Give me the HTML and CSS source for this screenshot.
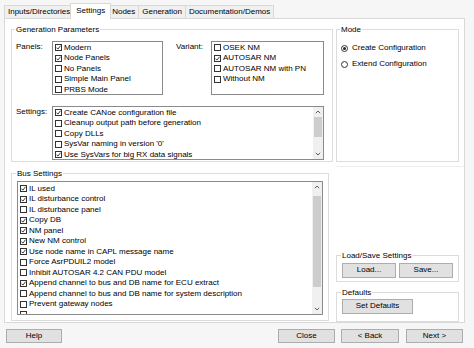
FILE: index.html
```html
<!DOCTYPE html>
<html>
<head>
<meta charset="utf-8">
<link rel="stylesheet" href="styles.css">
</head>
<body>
<div class="tabs">
  <div class="tab">Inputs/Directories</div>
  <div class="tab sel">Settings</div>
  <div class="tab">Nodes</div>
  <div class="tab">Generation</div>
  <div class="tab">Documentation/Demos</div>
</div>
<div class="page">
  <div class="col-left">
    <fieldset class="grp gen">
      <legend>Generation Parameters</legend>
      <div class="row">
        <div class="lbl">Panels:</div>
        <div class="lb lb-panels">
          <div class="items">
            <div class="it"><span class="cb on"><svg viewBox="0 0 5 5"><polyline points="0.4,2.6 1.9,4.1 4.6,0.7"/></svg></span>Modern</div>
            <div class="it"><span class="cb on"><svg viewBox="0 0 5 5"><polyline points="0.4,2.6 1.9,4.1 4.6,0.7"/></svg></span>Node Panels</div>
            <div class="it"><span class="cb"></span>No Panels</div>
            <div class="it"><span class="cb"></span>Simple Main Panel</div>
            <div class="it"><span class="cb"></span>PRBS Mode</div>
          </div>
        </div>
        <div class="lbl lbl-var">Variant:</div>
        <div class="lb lb-var">
          <div class="items">
            <div class="it"><span class="cb"></span>OSEK NM</div>
            <div class="it"><span class="cb on"><svg viewBox="0 0 5 5"><polyline points="0.4,2.6 1.9,4.1 4.6,0.7"/></svg></span>AUTOSAR NM</div>
            <div class="it"><span class="cb"></span>AUTOSAR NM with PN</div>
            <div class="it"><span class="cb"></span>Without NM</div>
          </div>
        </div>
      </div>
      <div class="row row-set">
        <div class="lbl">Settings:</div>
        <div class="lb lb-set">
          <div class="items">
            <div class="it"><span class="cb on"><svg viewBox="0 0 5 5"><polyline points="0.4,2.6 1.9,4.1 4.6,0.7"/></svg></span>Create CANoe configuration file</div>
            <div class="it"><span class="cb"></span>Cleanup output path before generation</div>
            <div class="it"><span class="cb"></span>Copy DLLs</div>
            <div class="it"><span class="cb"></span>SysVar naming in version '0'</div>
            <div class="it"><span class="cb on"><svg viewBox="0 0 5 5"><polyline points="0.4,2.6 1.9,4.1 4.6,0.7"/></svg></span>Use SysVars for big RX data signals</div>
          </div>
          <div class="sb">
            <div class="arr"><svg viewBox="0 0 6 4"><polyline points="0.8,3.2 3,1 5.2,3.2"/></svg></div>
            <div class="track"><div class="thumb thumb-s"></div></div>
            <div class="arr"><svg viewBox="0 0 6 4"><polyline points="0.8,0.8 3,3 5.2,0.8"/></svg></div>
          </div>
        </div>
      </div>
    </fieldset>
    <fieldset class="grp bus">
      <legend>Bus Settings</legend>
      <div class="lb lb-bus">
        <div class="items">
          <div class="it"><span class="cb on"><svg viewBox="0 0 5 5"><polyline points="0.4,2.6 1.9,4.1 4.6,0.7"/></svg></span>IL used</div>
          <div class="it"><span class="cb on"><svg viewBox="0 0 5 5"><polyline points="0.4,2.6 1.9,4.1 4.6,0.7"/></svg></span>IL disturbance control</div>
          <div class="it"><span class="cb"></span>IL disturbance panel</div>
          <div class="it"><span class="cb on"><svg viewBox="0 0 5 5"><polyline points="0.4,2.6 1.9,4.1 4.6,0.7"/></svg></span>Copy DB</div>
          <div class="it"><span class="cb on"><svg viewBox="0 0 5 5"><polyline points="0.4,2.6 1.9,4.1 4.6,0.7"/></svg></span>NM panel</div>
          <div class="it"><span class="cb on"><svg viewBox="0 0 5 5"><polyline points="0.4,2.6 1.9,4.1 4.6,0.7"/></svg></span>New NM control</div>
          <div class="it"><span class="cb on"><svg viewBox="0 0 5 5"><polyline points="0.4,2.6 1.9,4.1 4.6,0.7"/></svg></span>Use node name in CAPL message name</div>
          <div class="it"><span class="cb"></span>Force AsrPDUIL2 model</div>
          <div class="it"><span class="cb"></span>Inhibit AUTOSAR 4.2 CAN PDU model</div>
          <div class="it"><span class="cb on"><svg viewBox="0 0 5 5"><polyline points="0.4,2.6 1.9,4.1 4.6,0.7"/></svg></span>Append channel to bus and DB name for ECU extract</div>
          <div class="it"><span class="cb"></span>Append channel to bus and DB name for system description</div>
          <div class="it"><span class="cb"></span>Prevent gateway nodes</div>
          <div class="it"><span class="cb"></span></div>
        </div>
        <div class="sb">
          <div class="arr"><svg viewBox="0 0 6 4"><polyline points="0.8,3.2 3,1 5.2,3.2"/></svg></div>
          <div class="track"><div class="thumb thumb-b"></div></div>
          <div class="arr"><svg viewBox="0 0 6 4"><polyline points="0.8,0.8 3,3 5.2,0.8"/></svg></div>
        </div>
      </div>
    </fieldset>
  </div>
  <div class="col-right">
    <fieldset class="grp mode">
      <legend>Mode</legend>
      <div class="radio"><span class="rb on"></span>Create Configuration</div>
      <div class="radio"><span class="rb"></span>Extend Configuration</div>
    </fieldset>
    <div class="lower">
      <fieldset class="grp ls">
        <legend>Load/Save Settings</legend>
        <div class="btnrow">
          <div class="btn w-ls">Load...</div>
          <div class="btn w-ls">Save...</div>
        </div>
      </fieldset>
      <fieldset class="grp defs">
        <legend>Defaults</legend>
        <div class="btn w-def">Set Defaults</div>
      </fieldset>
    </div>
  </div>
</div>
<div class="footer">
  <div class="btn fb w-help">Help</div>
  <div class="spacer"></div>
  <div class="btn fb w-close">Close</div>
  <div class="btn fb w-back">&lt; Back</div>
  <div class="btn fb w-next">Next &gt;</div>
</div>
</body>
</html>
```
FILE: styles.css
```css
* { box-sizing: border-box; margin: 0; padding: 0; }
html, body { width: 474px; height: 348px; overflow: hidden; }
body {
  background: #f6f6f6;
  font-family: "Liberation Sans", Arial, sans-serif;
  font-size: 8px;
  line-height: 10.5px;
  color: #000;
}

/* tabs */
.tabs { display: flex; align-items: flex-end; height: 18px; padding-left: 4px; }
.tab {
  height: 13px; line-height: 12px; padding: 0 3px;
  border: 1px solid #d9d9d9; border-bottom: 0;
  background: #f0f0f0; margin-right: -1px; white-space: nowrap;
}
.tab.sel {
  height: 16px; line-height: 14px; padding: 0 5px;
  margin: 0 -3px -1px -3px; background: #fff;
  position: relative; z-index: 1;
}

/* page */
.page {
  display: flex; gap: 3px;
  width: 461px; height: 305px; margin-left: 4px;
  background: #fff; border: 1px solid #d9d9d9;
  padding: 6px 5px 0 6px;
}
.col-left { width: 322px; display: flex; flex-direction: column; gap: 7px; }
.col-right { width: 123px; display: flex; flex-direction: column; }

/* group boxes */
.grp { border: 1px solid #dcdcdc; min-width: 0; }
.grp legend { line-height: 9px; padding: 0 1px; margin-left: -1px; white-space: nowrap; }
.gen { height: 137px; padding: 7px 8px 1px 4px; }
.bus { height: 152px; padding: 3px 5px 5px 5px; margin-right: 4px; }
.mode { height: 137px; padding: 9px 4px 0 4px; }

.row { display: flex; }
.row-set { margin-top: 11px; }
.lbl { width: 36px; flex: none; margin-top: 1px; white-space: nowrap; }
.lbl-var { width: 35px; margin-left: 13px; }

/* list boxes */
.lb { border: 1px solid #8a8a8a; background: #fff; display: flex; overflow: hidden; }
.lb-panels { width: 111px; height: 54px; flex: none; }
.lb-var { flex: 1; height: 54px; }
.lb-set { flex: 1; height: 54px; }
.lb-bus { height: 134px; }
.items { flex: 1; min-width: 0; padding: 0.5px 2px 0 2px; }
.lb-bus .items { padding-top: 1.5px; }
.it { display: flex; align-items: center; height: 10.5px; white-space: nowrap; }
.cb {
  width: 7px; height: 7px; flex: none; margin-right: 2px;
  border: 1px solid #333; background: #fff;
  display: flex; align-items: center; justify-content: center;
}
.cb svg { width: 5px; height: 5px; display: block; }
.cb polyline { fill: none; stroke: #222; stroke-width: 0.9; }

/* scrollbars */
.sb { width: 10px; flex: none; background: #f0f0f0; display: flex; flex-direction: column; }
.arr { height: 10px; flex: none; display: flex; align-items: center; justify-content: center; }
.arr svg { width: 6px; height: 4px; display: block; }
.arr polyline { fill: none; stroke: #606060; stroke-width: 1; }
.track { flex: 1; }
.thumb { background: #cdcdcd; margin: 0 1px; }
.thumb-s { height: 20px; }
.thumb-b { height: 91px; margin-top: 4px; }

/* radios */
.radio { display: flex; align-items: center; height: 10px; white-space: nowrap; margin-bottom: 6px; }
.rb {
  width: 7px; height: 7px; flex: none; margin-right: 4px;
  border: 1px solid #333; border-radius: 50%; background: #fff;
  display: flex; align-items: center; justify-content: center;
}
.rb.on::after { content: ""; width: 3px; height: 3px; border-radius: 50%; background: #222; }

/* lower right */
.lower {
  flex: 1; margin-top: 4px; margin-right: -5px; padding-right: 5px;
  border-top: 1px solid #efefef;
  display: flex; flex-direction: column; justify-content: flex-end;
}
.ls { padding: 3px 5px 3px 5px; }
.defs { padding: 2px 5px 7px 5px; margin-top: 6px; }
.btnrow { display: flex; gap: 3px; }

/* buttons */
.btn {
  height: 15px; background: #e1e1e1; border: 1px solid #adadad;
  display: flex; align-items: center; justify-content: center;
  white-space: nowrap; flex: none;
}
.w-ls { width: 54px; }
.w-def { width: 71px; }

.footer { display: flex; gap: 6px; padding: 6px 11px 0 6px; }
.fb { height: 14px; }
.spacer { flex: 1; }
.w-help { width: 56px; }
.w-close { width: 57px; }
.w-back { width: 58px; }
.w-next { width: 57px; margin-left: 1px; }
```
